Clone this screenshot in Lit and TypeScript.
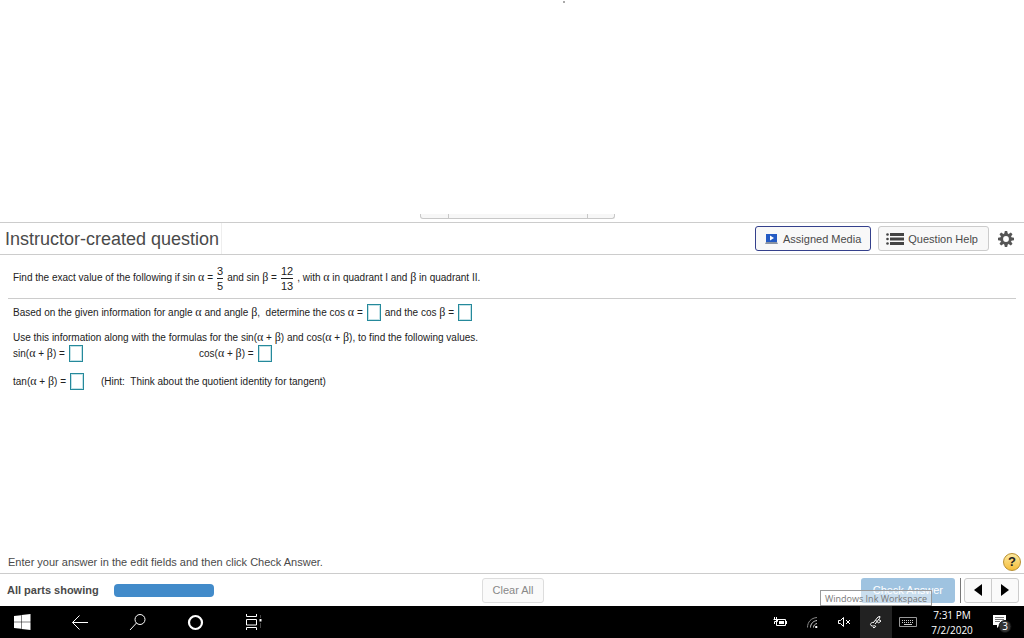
import { LitElement, html, css, svg } from "lit";
import { customElement, property } from "lit/decorators.js";

@customElement("math-fraction")
class MathFraction extends LitElement {
  @property() num = "";
  @property() den = "";
  static styles = css`
    :host { display: inline-flex; flex-direction: column; align-items: center; font-size: 11px; line-height: 14px; }
    .num { border-bottom: 1px solid #222; }
  `;
  render() {
    return html`<span class="num">${this.num}</span><span class="den">${this.den}</span>`;
  }
}

@customElement("answer-box")
class AnswerBox extends LitElement {
  @property() label = "";
  static styles = css`
    :host { display: inline-flex; }
    input { box-sizing: border-box; width: 14px; height: 17px; margin: 0; padding: 0; border: 1px solid #25899b; outline: 1px solid #c4e2e7; outline-offset: -2px; background: #fff; font: 10px "Liberation Sans", Arial, sans-serif; }
  `;
  render() {
    return html`<input type="text" aria-label=${this.label} />`;
  }
}

@customElement("task-bar")
class TaskBar extends LitElement {
  static styles = css`
    :host { display: flex; justify-content: space-between; height: 32px; background: #000; color: #fff; }
    .group { display: flex; }
    .apps { gap: 14px; }
    button { display: flex; align-items: center; justify-content: center; border: 0; margin: 0; padding: 0; background: none; color: inherit; font: inherit; }
    .app { width: 44px; }
    .tray { width: 32px; }
    .active { background: #222; }
    .clock { width: 56px; padding-top: 2px; flex-direction: column; font: 10px/15px "Open Sans", "Noto Sans", sans-serif; }
    .notes { width: 44px; padding-top: 2px; }
    svg { display: block; fill: none; stroke: #fff; }
  `;
  render() {
    return html`
      <div class="group apps">
        <button class="app" aria-label="Start">
          <svg width="18" height="18" viewBox="0 0 18 18"><path fill="#fff" stroke="none" d="M1 3 8 2.200v6.500H1zM8.500 2.100 17.500 1v7.700h-9zM1 9.200h7v6.500l-7-.8zM8.500 9.200h9V17l-9-1.100z" /></svg>
        </button>
        <button class="app" aria-label="Back">
          <svg width="18" height="16" viewBox="0 0 18 16"><path d="M17 8.500H1.500M8.500 1.500l-7 7 7 7" /></svg>
        </button>
        <button class="app" aria-label="Search">
          <svg width="18" height="18" viewBox="0 0 18 18"><circle cx="11" cy="6.500" r="5" /><path d="M7.500 10 1 17" /></svg>
        </button>
        <button class="app" aria-label="Cortana">
          <svg width="18" height="18" viewBox="0 0 18 18"><circle cx="8.500" cy="9.500" r="6.500" stroke-width="2.200" /></svg>
        </button>
        <button class="app" aria-label="Task View">
          <svg width="18" height="18" viewBox="0 0 18 18"><path d="M1.500 1v2.500h10V1M1.500 17v-2.500h10V17M1.500 6.500h10v5.500h-10z" /><path d="M15.500 6v2.500" stroke-width="2" /><path d="M15.500 2v3M15.500 10v5" stroke="#444" /></svg>
        </button>
      </div>
      <div class="group">
        <button class="tray" aria-label="Battery">
          <svg width="16" height="12" viewBox="0 0 16 12"><path d="M4.500 3.500h9v6h-9z" /><path d="M7 5h5v3H7zM14 5h1v3h-1z" fill="#fff" stroke="none" /><path d="M2.500 1v2M4.500 1v2M1.500 3.500h4v2h-3V8" /></svg>
        </button>
        <button class="tray" aria-label="Network">
          <svg width="14" height="14" viewBox="0 0 14 14"><path stroke="#888" d="M2.500 12.500C2.500 7 6 3 12 2.500" /><path stroke="#ccc" d="M5.500 12.500c0-3.500 2.500-6.500 6.500-7M8.500 12.500c0-2 1.500-3.700 3.500-4" /><path d="M10.500 11.500H12v1h-1.500z" /></svg>
        </button>
        <button class="tray" aria-label="Volume muted">
          <svg width="14" height="12" viewBox="0 0 14 12"><path d="M1.500 4.500h2l3-3v9l-3-3h-2zM9 4l4 4M13 4 9 8" /></svg>
        </button>
        <button class="tray active" aria-label="Windows Ink Workspace">
          <svg width="16" height="16" viewBox="0 0 16 16"><path d="M5.500 8.500 10 3l2-.500-.5 2L7 10M7.500 6l3 3 2.500-2-2.500-1.500" /><path d="M6 8.500C3.500 8 1.500 10 3 11.500s4-.5 4.500.500-1 2-2.500 1.500" /></svg>
        </button>
        <button class="tray" aria-label="Touch keyboard">
          <svg width="18" height="12" viewBox="0 0 18 12"><path stroke="#999" d="M.500 1.500h17v9H.500z" /><path stroke="#ccc" stroke-dasharray="1 1" d="M3 4.500h12M3 6.500h12" /><path stroke="#ccc" d="M5 8.500h8" /></svg>
        </button>
        <button class="clock"><span>7:31 PM</span><span>7/2/2020</span></button>
        <button class="notes" aria-label="3 notifications">
          <svg width="22" height="22" viewBox="0 0 22 22"><path fill="#fff" stroke="none" d="M2 3h13v10H9l-3 3v-3H2z" /><path stroke="#777" d="M4 5.500h9M4 7.500h9M4 9.500h5" /><circle cx="14" cy="14.500" r="6" fill="#333" stroke="#111" /><text x="14" y="18" text-anchor="middle" font-family="Open Sans, sans-serif" font-size="10" fill="#fff" stroke="none">3</text></svg>
        </button>
      </div>`;
  }
}

const gearTeeth = [0, 45, 90, 135, 180, 225, 270, 315];

@customElement("app-root")
class AppRoot extends LitElement {
  static styles = css`
    :host { display: flex; flex-direction: column; min-height: 100vh; background: #fff; color: #222; font: 11px/16px "Liberation Sans", Arial, sans-serif; }
    .above { display: flex; flex-direction: column; justify-content: space-between; height: 222px; }
    .speck { width: 2px; height: 2px; margin: 1px 0 0 55%; background: #aaa; }
    .strip { box-sizing: border-box; display: grid; grid-template-columns: 27px 1fr 27px; width: 195px; height: 5px; margin: 0 0 3px 41%; border: 1px solid #c8c8c8; border-top: 0; border-radius: 0 0 3px 3px; background: #f7f7f7; }
    .strip i + i { border-left: 1px solid #c8c8c8; }
    header { box-sizing: border-box; display: flex; align-items: center; height: 33px; padding: 0 10px 0 5px; border: 1px solid #ccc; border-width: 1px 0; gap: 7px; color: #4a4a4a; }
    h1 { align-self: stretch; margin: 0 auto 0 0; padding-right: 2px; border-right: 1px solid #eee; font-size: 18px; line-height: 32px; font-weight: 400; }
    button { box-sizing: border-box; margin: 0; font: inherit; color: inherit; }
    .tool { display: flex; align-items: center; gap: 4px; height: 25px; padding: 0 10px 0 7px; border: 1px solid #ccc; border-radius: 3px; background: #f8f8f8; }
    .media { border-color: #34408c; gap: 5px; padding: 0 9px; }
    .gear { display: flex; padding: 0; border: 0; background: none; margin-left: 2px; }
    main { flex: 1; padding: 0 8px; }
    p { margin: 0; }
    .question { display: flex; align-items: center; height: 40px; padding: 3px 5px 0; border-bottom: 1px solid #ccc; gap: 4px; font-size: 10px; }
    .pre { display: flex; }
    .g { font-family: "Liberation Serif", "Times New Roman", serif; font-size: 12px; line-height: 1; }
    .work { padding: 5px 5px 0; font-size: 10px; }
    .line { display: flex; align-items: center; gap: 4px; height: 17px; white-space: pre; }
    .formulas { margin-top: 9px; height: 15px; }
    .pair { display: grid; grid-template-columns: 182px 1fr; }
    .tan { margin-top: 11px; }
    .hint { padding-left: 13px; }
    .help { display: flex; align-items: center; justify-content: space-between; height: 23px; padding: 0 3px 0 8px; color: #4a4a4a; }
    .bulb { display: grid; place-items: center; width: 18px; height: 18px; padding: 0; border: 1px solid #b98f2e; border-radius: 50%; background: linear-gradient(#fde9a0, #f5bd3a); color: #222; font-weight: 700; font-size: 13px; line-height: 16px; }
    footer { box-sizing: border-box; position: relative; display: grid; grid-template-columns: 1fr auto 1fr; align-items: center; height: 33px; padding: 0 5px 0 7px; border-top: 1px solid #ccc; color: #4a4a4a; }
    .parts { display: flex; align-items: center; gap: 15px; font-weight: 700; }
    .bar { width: 100px; height: 13px; border-radius: 4px; background: #428bca; }
    .clear { height: 25px; padding: 0 10px; border: 1px solid #ddd; border-radius: 3px; background: #fafafa; color: #888; }
    .actions { display: flex; align-items: center; justify-content: flex-end; }
    .check { height: 25px; padding: 0 12px; border: 0; border-radius: 3px; background: #9fc3e0; color: #fff; }
    .nav { display: flex; margin-left: 5px; padding-left: 3px; border-left: 1px solid #777; }
    .nav button { display: grid; place-items: center; width: 28px; height: 25px; padding: 0; border: 1px solid #ccc; background: #fafafa; }
    .nav button:first-child { border-radius: 3px 0 0 3px; }
    .nav button + button { margin-left: -1px; border-radius: 0 3px 3px 0; }
    .tip { position: absolute; right: 92px; bottom: 0; box-sizing: border-box; height: 16px; padding: 0 4px; border: 1px solid #999; background: rgba(255, 255, 255, 0.45); color: #777; font: 9px/16px "Open Sans", "Noto Sans", sans-serif; white-space: nowrap; }
    svg { display: block; }
  `;

  render() {
    const a = html`<span class="g">α</span>`;
    const b = html`<span class="g">β</span>`;
    return html`
      <div class="above">
        <div class="speck"></div>
        <div class="strip"><i></i><i></i><i></i></div>
      </div>
      <header>
        <h1>Instructor-created question</h1>
        <button class="tool media">
          <svg width="13" height="12" viewBox="0 0 13 12"><path fill="#245bc4" d="M1 1h11v8H1z" /><path fill="#fff" d="M5 2.500 9 5 5 7.500z" /><path fill="#8b94a3" d="M1 9h11l1 2H0z" /></svg>
          Assigned Media
        </button>
        <button class="tool">
          <svg width="18" height="12" viewBox="0 0 18 12" fill="#444"><path d="M4 0h14v3H4zM4 4.500h14v3H4zM4 9h14v3H4z" /><circle cx="1.500" cy="1.500" r="1.300" /><circle cx="1.500" cy="6" r="1.300" /><circle cx="1.500" cy="10.500" r="1.300" /></svg>
          Question Help
        </button>
        <button class="gear" aria-label="Settings">
          <svg width="16" height="16" viewBox="-8 -8 16 16">${gearTeeth.map((t) => svg`<path d="M-1.800-5-1.200-8h2.400l.6 3z" fill="#555" transform="rotate(${t})" />`)}<circle r="4.300" fill="none" stroke="#555" stroke-width="2.800" /></svg>
        </button>
      </header>
      <main>
        <div class="question">
          <span>Find the exact value of the following if sin ${a} =</span>
          <math-fraction num="3" den="5"></math-fraction>
          <span>and sin ${b} =</span>
          <div class="line"><math-fraction num="12" den="13"></math-fraction><span>, with ${a} in quadrant I and ${b} in quadrant II.</span></div>
        </div>
        <div class="work">
          <div class="line"><span>Based on the given information for angle ${a} and angle ${b},  determine the cos ${a} =</span><answer-box label="cos α"></answer-box><span>and the cos ${b} =</span><answer-box label="cos β"></answer-box></div>
          <p class="line formulas"><span>Use this information along with the formulas for the sin(${a} + ${b}) and cos(${a} + ${b}), to find the following values.</span></p>
          <div class="line pair">
            <div class="line"><span>sin(${a} + ${b}) =</span><answer-box label="sin(α + β)"></answer-box></div>
            <div class="line"><span>cos(${a} + ${b}) =</span><answer-box label="cos(α + β)"></answer-box></div>
          </div>
          <div class="line tan"><span>tan(${a} + ${b}) =</span><answer-box label="tan(α + β)"></answer-box><span class="hint">(Hint:  Think about the quotient identity for tangent)</span></div>
        </div>
      </main>
      <div class="help">
        <span>Enter your answer in the edit fields and then click Check Answer.</span>
        <button class="bulb" aria-label="Help">?</button>
      </div>
      <footer>
        <div class="parts"><span>All parts showing</span><div class="bar"></div></div>
        <button class="clear">Clear All</button>
        <div class="actions">
          <button class="check">Check Answer</button>
          <div class="nav">
            <button aria-label="Previous"><svg width="8" height="12" viewBox="0 0 8 12"><path d="M8 0v12L0 6z" /></svg></button>
            <button aria-label="Next"><svg width="8" height="12" viewBox="0 0 8 12"><path d="M0 0v12l8-6z" /></svg></button>
          </div>
        </div>
        <div class="tip" role="tooltip">Windows Ink Workspace</div>
      </footer>
      <task-bar></task-bar>`;
  }
}
